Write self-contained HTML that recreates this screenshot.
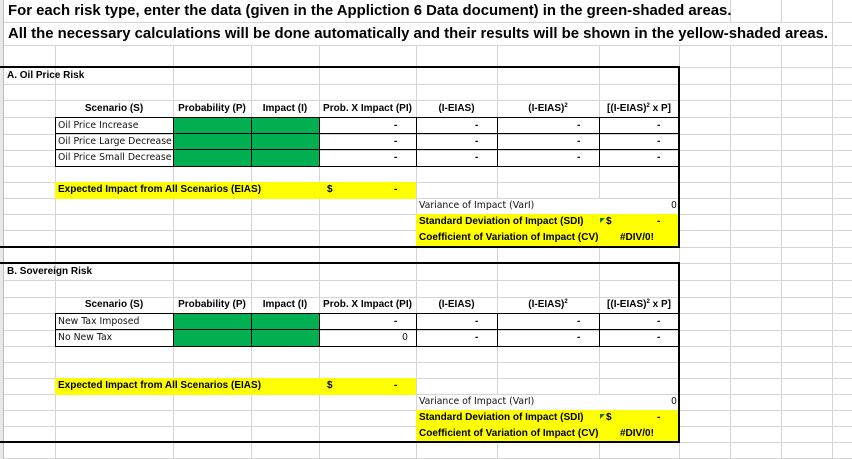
<!DOCTYPE html>
<html><head><meta charset="utf-8"><style>
*{margin:0;padding:0;box-sizing:border-box}
html,body{width:852px;height:459px;overflow:hidden}
body{background:#fff;position:relative;font-family:"Liberation Sans",sans-serif;color:#000}
.h{position:absolute;left:0;width:852px;height:1px;background:#d4d4d4}
.v{position:absolute;top:0;height:459px;width:1px;background:#d4d4d4}
.f{position:absolute}
.t{position:absolute;white-space:nowrap;font-size:10px;font-weight:bold;line-height:16px}
.n{position:absolute;white-space:nowrap;font-family:"DejaVu Sans",sans-serif;font-size:9.3px;line-height:16px;color:#111}
sup{font-size:6px;vertical-align:4px;line-height:0}
</style></head><body>
<!-- grid -->
<div class="h" style="top:22px"></div><div class="h" style="top:45px"></div><div class="h" style="top:67px"></div>
<div class="h" style="top:84px"></div><div class="h" style="top:100px"></div><div class="h" style="top:117px"></div>
<div class="h" style="top:134px"></div><div class="h" style="top:150px"></div><div class="h" style="top:166px"></div>
<div class="h" style="top:182px"></div><div class="h" style="top:198px"></div><div class="h" style="top:214px"></div>
<div class="h" style="top:230px"></div><div class="h" style="top:247px"></div><div class="h" style="top:263px"></div>
<div class="h" style="top:280px"></div><div class="h" style="top:297px"></div><div class="h" style="top:313px"></div>
<div class="h" style="top:330px"></div><div class="h" style="top:346px"></div><div class="h" style="top:362px"></div>
<div class="h" style="top:378px"></div><div class="h" style="top:394px"></div><div class="h" style="top:410px"></div>
<div class="h" style="top:426px"></div><div class="h" style="top:442px"></div><div class="h" style="top:458px"></div>
<div class="v" style="left:55px;top:45px;height:414px"></div><div class="v" style="left:173px;top:45px;height:414px"></div><div class="v" style="left:251px;top:45px;height:414px"></div>
<div class="v" style="left:319px;top:45px;height:414px"></div><div class="v" style="left:416px;top:45px;height:414px"></div><div class="v" style="left:497px;top:45px;height:414px"></div>
<div class="v" style="left:599px;top:45px;height:414px"></div><div class="v" style="left:679px;top:45px;height:414px"></div><div class="v" style="left:730px"></div>
<div class="v" style="left:781px"></div><div class="v" style="left:832px"></div>
<div class="f" style="left:0;top:0;width:4px;height:459px;background:#e8e8e8;border-right:1px solid #bdbdbd"></div>
<div class="f" style="left:5px;top:0;width:725px;height:22px;background:#fff"></div>
<div class="f" style="left:5px;top:23px;width:826px;height:22px;background:#fff"></div>
<div class="t" style="left:8px;top:3px;font-size:14.9px">For each risk type, enter the data (given in the Appliction 6 Data document) in the green-shaded areas.</div>
<div class="t" style="left:8px;top:26px;font-size:14.9px">All the necessary calculations will be done automatically and their results will be shown in the yellow-shaded areas.</div>

<!-- SECTION A -->
<div class="f" style="left:55px;top:117px;width:624px;height:50px;border:1px solid #000;border-right:none"></div>
<div class="f" style="left:173px;top:118px;width:146px;height:48px;background:#00b050"></div>
<div class="f" style="left:55px;top:133px;width:624px;height:1px;background:#000"></div>
<div class="f" style="left:55px;top:149px;width:624px;height:1px;background:#000"></div>
<div class="f" style="left:173px;top:117px;width:1px;height:50px;background:#000"></div>
<div class="f" style="left:251px;top:117px;width:1px;height:50px;background:#000"></div>
<div class="f" style="left:319px;top:117px;width:1px;height:50px;background:#000"></div>
<div class="f" style="left:416px;top:117px;width:1px;height:50px;background:#000"></div>
<div class="f" style="left:497px;top:117px;width:1px;height:50px;background:#000"></div>
<div class="f" style="left:599px;top:117px;width:1px;height:50px;background:#000"></div>
<div class="f" style="left:55px;top:182px;width:361px;height:17px;background:#ffff00"></div>
<div class="f" style="left:416px;top:214px;width:263px;height:33px;background:#ffff00"></div>
<div class="f" style="left:417px;top:199px;width:262px;height:15px;background:#fff"></div>
<div class="f" style="left:0;top:66px;width:680px;height:2px;background:#000"></div>
<div class="f" style="left:0;top:246px;width:680px;height:2px;background:#000"></div>
<div class="f" style="left:678px;top:66px;width:2px;height:182px;background:#000"></div>

<div class="t" style="left:7px;top:68px">A. Oil Price Risk</div>
<div class="t" style="left:55px;top:101px;width:118px;text-align:center">Scenario (S)</div>
<div class="t" style="left:173px;top:101px;width:78px;text-align:center">Probability (P)</div>
<div class="t" style="left:251px;top:101px;width:68px;text-align:center">Impact (I)</div>
<div class="t" style="left:319px;top:101px;width:97px;text-align:center">Prob. X Impact (PI)</div>
<div class="t" style="left:416px;top:101px;width:81px;text-align:center">(I-EIAS)</div>
<div class="t" style="left:497px;top:101px;width:102px;text-align:center">(I-EIAS)<sup>2</sup></div>
<div class="t" style="left:599px;top:101px;width:80px;text-align:center">[(I-EIAS)<sup>2</sup> x P]</div>
<div class="n" style="left:58px;top:118px">Oil Price Increase</div>
<div class="n" style="left:58px;top:134px">Oil Price Large Decrease</div>
<div class="n" style="left:58px;top:150px">Oil Price Small Decrease</div>
<div class="t" style="left:394px;top:118px">-</div><div class="t" style="left:475px;top:118px">-</div><div class="t" style="left:577px;top:118px">-</div><div class="t" style="left:657px;top:118px">-</div>
<div class="t" style="left:394px;top:134px">-</div><div class="t" style="left:475px;top:134px">-</div><div class="t" style="left:577px;top:134px">-</div><div class="t" style="left:657px;top:134px">-</div>
<div class="t" style="left:394px;top:150px">-</div><div class="t" style="left:475px;top:150px">-</div><div class="t" style="left:577px;top:150px">-</div><div class="t" style="left:657px;top:150px">-</div>
<div class="t" style="left:58px;top:182px">Expected Impact from All Scenarios (EIAS)</div>
<div class="t" style="left:327px;top:182px">$</div><div class="t" style="left:394px;top:182px">-</div>
<div class="n" style="left:419px;top:198px">Variance of Impact (VarI)</div>
<div class="n" style="left:671px;top:198px">0</div>
<div class="t" style="left:419px;top:214px">Standard Deviation of Impact (SDI)</div>
<div class="t" style="left:606px;top:214px">$</div><div class="t" style="left:657px;top:214px">-</div>
<div class="t" style="left:419px;top:230px;width:180px;overflow:hidden">Coefficient of Variation of Impact (CV)</div>
<div class="t" style="left:620px;top:230px">#DIV/0!</div>
<div class="f" style="left:600px;top:218px;width:0;height:0;border-top:5px solid #1a7a2a;border-right:5px solid transparent"></div>

<!-- SECTION B -->
<div class="f" style="left:55px;top:313px;width:624px;height:34px;border:1px solid #000;border-right:none"></div>
<div class="f" style="left:173px;top:314px;width:146px;height:32px;background:#00b050"></div>
<div class="f" style="left:55px;top:329px;width:624px;height:1px;background:#000"></div>
<div class="f" style="left:173px;top:313px;width:1px;height:34px;background:#000"></div>
<div class="f" style="left:251px;top:313px;width:1px;height:34px;background:#000"></div>
<div class="f" style="left:319px;top:313px;width:1px;height:34px;background:#000"></div>
<div class="f" style="left:416px;top:313px;width:1px;height:34px;background:#000"></div>
<div class="f" style="left:497px;top:313px;width:1px;height:34px;background:#000"></div>
<div class="f" style="left:599px;top:313px;width:1px;height:34px;background:#000"></div>
<div class="f" style="left:55px;top:378px;width:361px;height:17px;background:#ffff00"></div>
<div class="f" style="left:416px;top:410px;width:263px;height:33px;background:#ffff00"></div>
<div class="f" style="left:417px;top:395px;width:262px;height:15px;background:#fff"></div>
<div class="f" style="left:0;top:262px;width:680px;height:2px;background:#000"></div>
<div class="f" style="left:0;top:441px;width:680px;height:2px;background:#000"></div>
<div class="f" style="left:678px;top:262px;width:2px;height:181px;background:#000"></div>

<div class="t" style="left:7px;top:264px">B. Sovereign Risk</div>
<div class="t" style="left:55px;top:297px;width:118px;text-align:center">Scenario (S)</div>
<div class="t" style="left:173px;top:297px;width:78px;text-align:center">Probability (P)</div>
<div class="t" style="left:251px;top:297px;width:68px;text-align:center">Impact (I)</div>
<div class="t" style="left:319px;top:297px;width:97px;text-align:center">Prob. X Impact (PI)</div>
<div class="t" style="left:416px;top:297px;width:81px;text-align:center">(I-EIAS)</div>
<div class="t" style="left:497px;top:297px;width:102px;text-align:center">(I-EIAS)<sup>2</sup></div>
<div class="t" style="left:599px;top:297px;width:80px;text-align:center">[(I-EIAS)<sup>2</sup> x P]</div>
<div class="n" style="left:58px;top:314px">New Tax Imposed</div>
<div class="n" style="left:58px;top:330px">No New Tax</div>
<div class="t" style="left:394px;top:314px">-</div><div class="t" style="left:475px;top:314px">-</div><div class="t" style="left:577px;top:314px">-</div><div class="t" style="left:657px;top:314px">-</div>
<div class="n" style="left:402px;top:330px">0</div><div class="t" style="left:475px;top:330px">-</div><div class="t" style="left:577px;top:330px">-</div><div class="t" style="left:657px;top:330px">-</div>
<div class="t" style="left:58px;top:378px">Expected Impact from All Scenarios (EIAS)</div>
<div class="t" style="left:327px;top:378px">$</div><div class="t" style="left:394px;top:378px">-</div>
<div class="n" style="left:419px;top:394px">Variance of Impact (VarI)</div>
<div class="n" style="left:671px;top:394px">0</div>
<div class="t" style="left:419px;top:410px">Standard Deviation of Impact (SDI)</div>
<div class="t" style="left:606px;top:410px">$</div><div class="t" style="left:657px;top:410px">-</div>
<div class="t" style="left:419px;top:426px;width:180px;overflow:hidden">Coefficient of Variation of Impact (CV)</div>
<div class="t" style="left:620px;top:426px">#DIV/0!</div>
<div class="f" style="left:600px;top:414px;width:0;height:0;border-top:5px solid #1a7a2a;border-right:5px solid transparent"></div>
</body></html>
